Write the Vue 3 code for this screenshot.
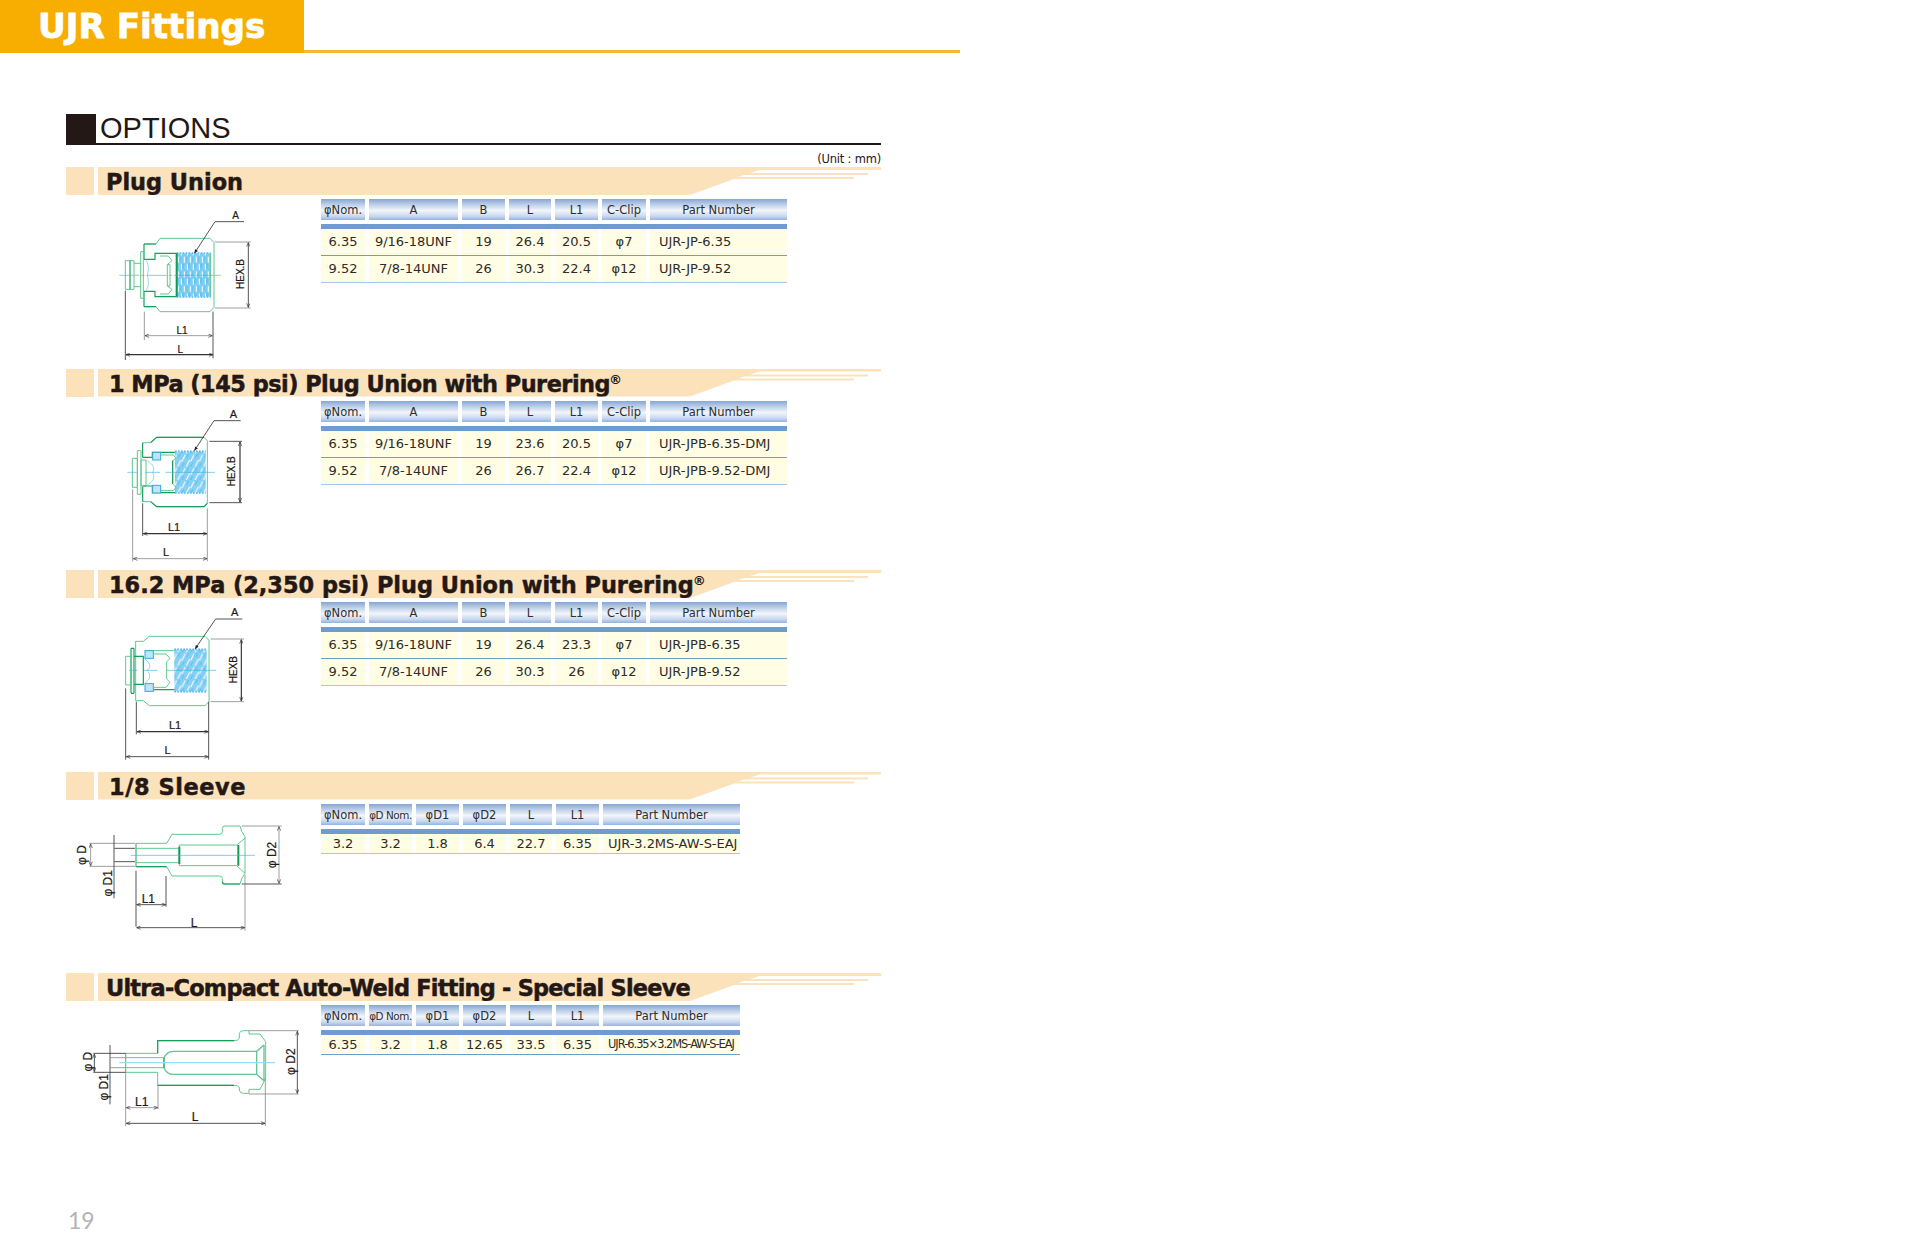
<script setup>
const wideCols = [44, 89, 43, 42, 43, 44, 137]
const smallCols = [44, 43, 43, 43, 42, 43, 137]
const wideHead = ['φNom.', 'A', 'B', 'L', 'L1', 'C-Clip', 'Part Number']
const smallHead = ['φNom.', 'φD Nom.', 'φD1', 'φD2', 'L', 'L1', 'Part Number']
const sections = [
  { id: 1, title: 'Plug Union', ls: 0, inset: false, cols: wideCols, head: wideHead, tall: true, rows: [
    ['6.35', '9/16-18UNF', '19', '26.4', '20.5', 'φ7', 'UJR-JP-6.35'],
    ['9.52', '7/8-14UNF', '26', '30.3', '22.4', 'φ12', 'UJR-JP-9.52'] ] },
  { id: 2, title: '1 MPa (145 psi) Plug Union with Purering', ls: -0.5, reg: true, inset: true, cols: wideCols, head: wideHead, tall: true, rows: [
    ['6.35', '9/16-18UNF', '19', '23.6', '20.5', 'φ7', 'UJR-JPB-6.35-DMJ'],
    ['9.52', '7/8-14UNF', '26', '26.7', '22.4', 'φ12', 'UJR-JPB-9.52-DMJ'] ] },
  { id: 3, title: '16.2 MPa (2,350 psi) Plug Union with Purering', ls: 0, reg: true, inset: true, cols: wideCols, head: wideHead, tall: true, rows: [
    ['6.35', '9/16-18UNF', '19', '26.4', '23.3', 'φ7', 'UJR-JPB-6.35'],
    ['9.52', '7/8-14UNF', '26', '30.3', '26', 'φ12', 'UJR-JPB-9.52'] ] },
  { id: 4, title: '1/8 Sleeve', ls: 0.6, inset: true, cols: smallCols, head: smallHead, tall: false, rows: [
    ['3.2', '3.2', '1.8', '6.4', '22.7', '6.35', 'UJR-3.2MS-AW-S-EAJ'] ] },
  { id: 5, title: 'Ultra-Compact Auto-Weld Fitting - Special Sleeve', ls: -0.75, inset: false, cols: smallCols, head: smallHead, tall: false, tight: true, rows: [
    ['6.35', '3.2', '1.8', '12.65', '33.5', '6.35', 'UJR-6.35×3.2MS-AW-S-EAJ'] ] }
]
</script>

<template>
  <div class="page">
    <svg class="defs" width="0" height="0" aria-hidden="true">
      <defs>
        <marker id="arr" markerUnits="userSpaceOnUse" markerWidth="14" markerHeight="12" refX="13" refY="6" orient="auto-start-reverse">
          <path d="M1 1 L13 6 L1 11" fill="none" stroke="#333" stroke-width="2" />
        </marker>
        <marker id="arrf" markerUnits="userSpaceOnUse" markerWidth="14" markerHeight="12" refX="13" refY="6" orient="auto-start-reverse">
          <path d="M1 1 L13 6 L1 11 Z" fill="#222" />
        </marker>
        <pattern id="thread" patternUnits="userSpaceOnUse" width="18" height="44">
          <rect width="18" height="44" fill="#7ccdf2" />
          <path d="M4 2 V20 M13 24 V42" stroke="#fff" stroke-width="3" />
          <path d="M9 0 V16 M0 24 V38" stroke="#3fb0e6" stroke-width="2" />
        </pattern>
        <pattern id="threadd" patternUnits="userSpaceOnUse" width="26" height="40">
          <rect width="26" height="40" fill="#86d0f3" />
          <path d="M2 24 L12 4 M15 40 L25 20" stroke="#fff" stroke-width="3" />
          <path d="M16 14 L22 2 M2 40 L8 28" stroke="#3fb0e6" stroke-width="2" />
        </pattern>
      </defs>
    </svg>

    <header class="top">
      <div class="tab">UJR Fittings</div>
      <div class="tab-line"></div>
    </header>

    <main class="main">
      <div class="opt">
        <span class="opt-box"></span>
        <h1 class="opt-title">OPTIONS</h1>
      </div>
      <div class="unit">(Unit : mm)</div>

      <section v-for="s in sections" :key="s.id" class="sec">
        <div class="band-row">
          <span class="band-box"></span>
          <h2 class="band" :class="{ inset: s.inset }" :style="{ letterSpacing: s.ls + 'px' }">{{ s.title }}<sup v-if="s.reg" class="reg">®</sup></h2>
        </div>
        <div class="sec-body">
          <div class="fig">
            <svg v-if="s.id === 1" class="draw" viewBox="21 15 762 519" width="254" height="173">
              <rect x="350" y="190" width="102" height="130" fill="url(#thread)" />
              <path class="serr" d="M350 189 H452 M350 321 H452" />
              <path class="lg" d="M252 162 H288 L300 145 H450 L462 158 V352 L450 365 H300 L288 350 H252" />
              <path class="dg" d="M252 162 H288 M252 350 H288 M252 162 V208 M252 304 V350" />
              <path class="lg" d="M242 185 H250 V325 H242 Z M196 212 H222 V298 H196 Z M222 220 H242 M222 290 H242" />
              <path class="dg" d="M210 212 V298 M252 208 H285 V190 H350 M252 304 H285 V320 H350" />
              <path class="dgt" d="M350 190 V320" />
              <path class="lg" d="M300 198 H325 L336 212 L322 224 V288 L336 298 L325 312 H300 M322 224 H330 V288 H322" />
              <path class="lb" d="M258 208 Q270 230 262 256 Q270 282 258 304" />
              <path class="lg" d="M452 190 V320" />
              <path class="cl" d="M178 256 H482" stroke-dasharray="60 6 10 6" />
              <path class="dim" d="M552 95 H465 L403 190" marker-end="url(#arrf)" />
              <path class="dimg" d="M465 156 H572 M465 354 H572" />
              <path class="dim" d="M565 158 V352" marker-start="url(#arr)" marker-end="url(#arr)" />
              <path class="dimg" d="M253 365 V450" />
              <path class="dim" d="M459 365 V505 M196 302 V510" />
              <path class="dimg" d="M255 437 H457" marker-start="url(#arr)" marker-end="url(#arr)" />
              <path class="dim dimt" d="M198 494 H459" marker-start="url(#arr)" marker-end="url(#arr)" />
              <text class="lbl" x="527" y="86" text-anchor="middle">A</text>
              <text class="lbl" x="366" y="433" text-anchor="middle">L1</text>
              <text class="lbl" x="361" y="490" text-anchor="middle">L</text>
              <text class="lbl" transform="translate(551 252) rotate(-90)" text-anchor="middle">HEX.B</text>
            </svg>

            <svg v-else-if="s.id === 2" class="draw" viewBox="21 -9 762 519" width="254" height="173">
              <rect x="345" y="155" width="92" height="123" fill="url(#threadd)" />
              <path class="serr" d="M345 154 H437 M345 279 H437" />
              <path class="lg" d="M248 128 H272 L290 112 H432 L442 122 V310 L432 320 H290 L272 305 H248" />
              <path class="dg" d="M248 128 V172 M248 260 V305 M272 305 L290 320 H432 L442 310 M272 128 L290 112 H432" />
              <path class="lg" d="M232 152 H243 V283 H232 Z M217 175 H232 V262 H217 Z M243 180 H258 V258 H243 Z" />
              <path class="dg" d="M248 172 H277 V157 H345 M248 258 H277 V278 H345" />
              <rect class="ring" x="278" y="157" width="24" height="23" />
              <rect class="ring" x="278" y="256" width="24" height="23" />
              <path class="lg" d="M302 165 H340 L348 175 L338 182 V252 L348 262 L340 272 H302" />
              <path class="dg" d="M338 182 V252" />
              <path class="lb" d="M262 182 Q290 200 278 217 Q290 238 262 256" />
              <path class="cl" d="M202 217 H230 M255 217 H300 M316 217 H465" />
              <path class="dim" d="M542 62 H462 L403 152" marker-end="url(#arrf)" />
              <path class="dim" d="M448 124 H546 M448 308 H546" />
              <path class="dim dimt" d="M540 126 V306" marker-start="url(#arr)" marker-end="url(#arr)" />
              <path class="dim" d="M248 310 V408" />
              <path class="dimg" d="M442 325 V484 M218 268 V484" />
              <path class="dim dimt" d="M250 401 H441" marker-start="url(#arr)" marker-end="url(#arr)" />
              <path class="dimg" d="M220 476 H441" marker-start="url(#arr)" marker-end="url(#arr)" />
              <text class="lbl lg2" x="520" y="55" text-anchor="middle">A</text>
              <text class="lbl lg2" x="342" y="392" text-anchor="middle">L1</text>
              <text class="lbl lg2" x="318" y="467" text-anchor="middle">L</text>
              <text class="lbl" transform="translate(526 214) rotate(-90)" text-anchor="middle">HEX.B</text>
            </svg>

            <svg v-else-if="s.id === 3" class="draw" viewBox="21 -3 762 519" width="254" height="173">
              <rect x="343" y="152" width="97" height="125" fill="url(#threadd)" />
              <path class="serr" d="M343 151 H440 M343 278 H440" />
              <path class="lg" d="M227 127 H250 L268 112 H435 L447 124 V308 L435 320 H268 L250 305 H227 Z" />
              <path class="dg" d="M213 148 V283 M222 148 V283 M213 148 H222 M213 283 H222 M222 172 H250 V256 H222" />
              <path class="lg" d="M197 172 H213 V258 H197 Z" />
              <path class="dg" d="M255 272 H280 M280 272 H343" />
              <path class="lg" d="M255 155 H343 M282 165 H318 L330 178 L320 188 V240 L330 250 L318 265 H282" />
              <rect class="ring" x="255" y="155" width="25" height="23" />
              <rect class="ring" x="255" y="254" width="25" height="23" />
              <path class="lb" d="M255 180 Q280 200 262 214 Q280 235 255 252" />
              <path class="cl" d="M207 214 H232 M252 214 H292 M320 214 H468" />
              <path class="dim" d="M547 60 H467 L405 150" marker-end="url(#arrf)" />
              <path class="dimg" d="M452 120 H552 M452 308 H552" />
              <path class="dim dimt" d="M544 122 V306" marker-start="url(#arr)" marker-end="url(#arr)" />
              <path class="dim" d="M229 308 V406 M197 268 V482 M446 308 V482" />
              <path class="dim dimt" d="M231 398 H445" marker-start="url(#arr)" marker-end="url(#arr)" />
              <path class="dim" d="M199 473 H445" marker-start="url(#arr)" marker-end="url(#arr)" />
              <text class="lbl lg2" x="524" y="52" text-anchor="middle">A</text>
              <text class="lbl lg2" x="345" y="390" text-anchor="middle">L1</text>
              <text class="lbl lg2" x="323" y="465" text-anchor="middle">L</text>
              <text class="lbl" transform="translate(532 212) rotate(-90)" text-anchor="middle">HEXB</text>
            </svg>

            <svg v-else-if="s.id === 4" class="draw" viewBox="21 0 762 519" width="254" height="173">
              <path class="lg" d="M228 130 H320 L336 103 H478 Q487 103 487 95 V85 Q487 78 495 78 H540 Q543 95 555 110 V220 Q543 235 540 252 H495 Q487 252 487 245 V235 Q487 228 478 228 H336 L320 200 H228 Z" />
              <path class="dg" d="M228 200 H320 M487 245 Q487 252 495 252 H540" />
              <path class="lg" d="M228 145 H355 M228 188 H355 M358 135 H530 M358 197 H530 M530 135 L555 115 M530 197 L555 220 M228 130 V200 M358 135 V197" />
              <path class="dgt" d="M358 140 V192 M535 135 V197" />
              <path class="cl" d="M212 166 H585" />
              <path class="dimg" d="M88 130 H225 M88 199 H225 M545 78 H665" />
              <path class="dim" d="M163 145 H225 M163 185 H225 M162 105 V295 M545 252 H665" />
              <path class="dimg" d="M92 132 V197" marker-start="url(#arr)" marker-end="url(#arr)" />
              <path class="dimg" d="M657 80 V250" marker-start="url(#arr)" marker-end="url(#arr)" />
              <path class="dim" d="M228 212 V380 M318 228 V320" />
              <path class="dimg" d="M555 225 V392" />
              <path class="dim" d="M230 314 H317" marker-start="url(#arr)" marker-end="url(#arr)" />
              <path class="dim" d="M230 383 H554" marker-start="url(#arr)" marker-end="url(#arr)" />
              <text class="lbl big" x="265" y="308" text-anchor="middle">L1</text>
              <text class="lbl big" x="402" y="380" text-anchor="middle">L</text>
              <text class="lbl big" transform="translate(78 165) rotate(-90)" text-anchor="middle">φ D</text>
              <text class="lbl big" transform="translate(157 250) rotate(-90)" text-anchor="middle">φ D1</text>
              <text class="lbl big" transform="translate(648 165) rotate(-90)" text-anchor="middle">φ D2</text>
            </svg>

            <svg v-else class="draw" viewBox="21 -27 762 519" width="254" height="173">
              <path class="lg" d="M197 130 H293 V92 H522 Q535 92 538 85 V70 Q540 62 550 62 H567 V72 H600 L617 95 V205 L600 238 H567 V250 H550 Q540 250 538 240 V232 Q535 226 522 226 H293 V187 H197 Z" />
              <path class="dg" d="M293 130 V92 H522 M293 226 H522" />
              <path class="lg" d="M197 143 H312 M197 173 H312 M197 130 V187" />
              <path class="lgt" d="M312 143 Q320 125 340 124 H590 L612 105 M312 173 Q320 193 340 193 H590 L612 212 M590 124 V193 M612 105 V212" />
              <path class="dgt2" d="M312 143 V173" />
              <path class="clw" d="M178 158 H645" />
              <path class="dim" d="M100 130 H197 M100 187 H197 M150 105 V283" />
              <path class="dimg" d="M150 143 H197 M150 173 H197" />
              <path class="dim" d="M103 132 V185" marker-start="url(#arr)" marker-end="url(#arr)" />
              <path class="dimg" d="M567 62 H716 M567 252 H716" />
              <path class="dim" d="M712 64 V250" marker-start="url(#arr)" marker-end="url(#arr)" />
              <path class="dimg" d="M197 187 V348 M294 226 V297 M616 205 V348" />
              <path class="dimg" d="M199 293 H293" marker-start="url(#arr)" marker-end="url(#arr)" />
              <path class="dim" d="M199 340 H615" marker-start="url(#arr)" marker-end="url(#arr)" />
              <text class="lbl big" x="245" y="288" text-anchor="middle">L1</text>
              <text class="lbl big" x="405" y="334" text-anchor="middle">L</text>
              <text class="lbl big" transform="translate(96 155) rotate(-90)" text-anchor="middle">φ D</text>
              <text class="lbl big" transform="translate(145 232) rotate(-90)" text-anchor="middle">φ D1</text>
              <text class="lbl big" transform="translate(706 155) rotate(-90)" text-anchor="middle">φ D2</text>
            </svg>
          </div>

          <div class="tbl">
            <div class="tr th">
              <div v-for="(h, i) in s.head" :key="i" class="hc" :class="{ squeeze: h === 'φD Nom.' }" :style="{ width: s.cols[i] + 'px' }">{{ h }}</div>
            </div>
            <div class="bar"></div>
            <div v-for="(r, ri) in s.rows" :key="ri" class="tr td" :class="{ tall: s.tall, last: ri === s.rows.length - 1, tight: s.tight }">
              <div v-for="(c, i) in r" :key="i" class="dc" :class="{ part: i === 6 }" :style="{ width: s.cols[i] + 'px' }">{{ c }}</div>
            </div>
          </div>
        </div>
      </section>

      <div class="pageno">19</div>
    </main>
  </div>
</template>

<style>
html, body { margin: 0; background: #fff; }
</style>

<style scoped>
.page {
  width: 1919px;
  height: 1246px;
  overflow: hidden;
  background: #fff;
  color: #231815;
  font-family: "DejaVu Sans", sans-serif;
}
.defs { position: absolute; }
.top { display: flex; height: 53px; }
.tab {
  width: 304px;
  box-sizing: border-box;
  padding-left: 38px;
  background: #f8ae00;
  color: #fff;
  font-weight: 700;
  font-size: 34.2px;
  line-height: 53px;
  -webkit-text-stroke: 0.8px #fff;
}
.tab-line { width: 656px; height: 3px; align-self: flex-end; background: #f8b62b; }
.main { margin-left: 66px; width: 815px; }
.opt {
  display: flex;
  align-items: flex-end;
  margin-top: 61px;
  height: 29px;
  border-bottom: 2px solid #231815;
}
.opt-box { width: 30px; height: 29px; background: #231815; }
.opt-title {
  margin: 0 0 0 4px;
  font-family: "Liberation Sans", sans-serif;
  font-weight: 400;
  font-size: 29px;
  line-height: 29px;
}
.unit {
  height: 22px;
  font-size: 11.5px;
  line-height: 28px;
  text-align: right;
  letter-spacing: -0.2px;
}
.sec { height: 201.5px; }
.band-row { display: flex; gap: 4px; height: 28px; }
.band-box { width: 28px; background: #fbe2bb; }
.band {
  flex: 1;
  margin: 0;
  box-sizing: border-box;
  padding-left: 8px;
  background: #fbe2bb;
  clip-path: polygon(0 0, 783px 0, 783px 3px, 662px 3px, 652px 6px, 770px 6px, 770px 8px, 646px 8px, 640px 10px, 756px 10px, 756px 12px, 636px 12px, 592px 28px, 0 28px);
  font-size: 22.4px;
  font-weight: 700;
  line-height: 30px;
  white-space: nowrap;
  -webkit-text-stroke: 0.5px #231815;
}
.band.inset { padding-left: 11px; }
.reg { font-size: 13px; line-height: 0; vertical-align: 8px; -webkit-text-stroke: 0; letter-spacing: 0; margin-left: -1px; }
.sec-body { display: flex; }
.fig { width: 254px; height: 173px; flex: none; padding-left: 1px; }
.draw { display: block; }
.tbl { padding-top: 4px; }
.tr { display: flex; gap: 4px; }
.hc {
  height: 21px;
  line-height: 22px;
  font-size: 11.5px;
  text-align: center;
  white-space: nowrap;
  color: #2e2e2e;
  background: linear-gradient(#86a6d6 0%, #c4d4ea 30%, #f2f5fa 55%, #c9d8ee 82%, #94b3e0 100%);
}
.hc.squeeze { font-size: 10.4px; letter-spacing: -0.45px; }
.bar { height: 5px; margin-top: 4px; background: #6f9bd1; }
.td { border-bottom: 1px solid #a9c6ea; }
.td:not(.last) { border-bottom-color: #6f9bd1; }
.td.tight { border-bottom-color: #6f9bd1; }
.dc {
  height: 19px;
  line-height: 19px;
  font-size: 13px;
  text-align: center;
  white-space: nowrap;
  color: #2e2b28;
  background: #fffde3;
}
.td.tall .dc { height: 26px; line-height: 26px; }
.part { text-align: left; padding-left: 9px; box-sizing: border-box; }
.td:not(.tall) .part { font-size: 13px; letter-spacing: -0.05px; padding-left: 5px; }
.td.tight .part { font-size: 11.4px; letter-spacing: -1px; padding-left: 5px; }
.pageno {
  margin-top: 30px;
  padding-left: 2px;
  font-family: Lato, sans-serif;
  font-size: 23px;
  line-height: 30px;
  color: #b3b3b3;
}
.lg, .dg, .dgt, .dgt2, .lgt, .lb, .cl, .clw, .dim, .dimg, .serr { fill: none; }
.lg { stroke: #5fc88f; stroke-width: 3; }
.lgt { stroke: #62c592; stroke-width: 4; }
.dg { stroke: #12a05a; stroke-width: 3.5; }
.dgt { stroke: #0f9a55; stroke-width: 6; }
.dgt2 { stroke: #0f9a55; stroke-width: 4; }
.lb { stroke: #7fd0f2; stroke-width: 2.5; }
.cl { stroke: #3fb4e6; stroke-width: 2; }
.clw { stroke: #9bdcf6; stroke-width: 4; }
.serr { stroke: #4db8ea; stroke-width: 5; stroke-dasharray: 5 4; }
.ring { fill: #bfe6f8; stroke: #2fa9e0; stroke-width: 3; }
.dim { stroke: #333; stroke-width: 2.5; }
.dim.dimt { stroke-width: 3.5; }
.dimg { stroke: #8a8a8a; stroke-width: 2.5; }
.lbl { fill: #231815; stroke: #231815; stroke-width: 0.6; font-family: "Liberation Sans", sans-serif; font-size: 30px; }
.lbl.lg2 { font-size: 33px; }
.lbl.big { font-size: 36px; }
</style>
